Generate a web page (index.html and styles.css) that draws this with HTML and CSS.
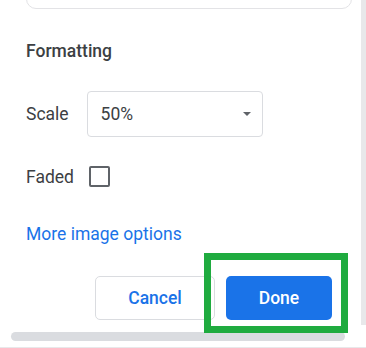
FILE: index.html
```html
<!DOCTYPE html>
<html lang="en">
  <head>
    <meta charset="UTF-8" />
    <title>Image options</title>
    <link rel="stylesheet" href="styles.css">
  </head>
  <body>
    <div class="frame">
      <div class="viewport">
        <div class="content">
          <div class="card"></div>
          <h2 class="heading">Formatting</h2>
          <div class="row scale-row">
            <span class="label">Scale</span>
            <div class="select">
              <span>50%</span>
              <span class="arrow"></span>
            </div>
          </div>
          <div class="row faded-row">
            <span class="label">Faded</span>
            <span class="checkbox"></span>
          </div>
          <a href="#" class="more-link">More image options</a>
          <div class="actions">
            <button type="button" class="btn btn-cancel">Cancel</button>
            <button type="button" class="btn btn-done">Done</button>
          </div>
        </div>
        <div class="vscroll"></div>
      </div>
      <div class="hscroll">
        <div class="hthumb"></div>
      </div>
      <div class="highlight"></div>
    </div>
  </body>
</html>
```
FILE: styles.css
```css
body {
  margin: 0;
  background: #fff;
  font-family: Roboto, "Liberation Sans", sans-serif;
  color: #3c4043;
}

.frame {
  position: relative;
  width: 366px;
  height: 348px;
  overflow: hidden;
}

.viewport {
  display: flex;
  height: 325px;
}

.content {
  flex: 1;
  padding-left: 26px;
}

.vscroll {
  width: 5px;
  background: #e8e8ea;
}

.card {
  width: 324px;
  height: 40px;
  margin-top: -33px;
  border: 1px solid #e3e3e6;
  border-radius: 10px;
}

.heading {
  margin: 32px 0 0;
  font-size: 17.5px;
  font-weight: 500;
  line-height: 20px;
}

.row {
  display: flex;
  align-items: center;
}

.label {
  font-size: 17.5px;
  line-height: 20px;
}

.scale-row {
  margin-top: 30px;
}

.select {
  display: flex;
  align-items: center;
  justify-content: space-between;
  box-sizing: border-box;
  width: 176px;
  height: 46px;
  margin-left: 18px;
  padding: 0 11px 0 13px;
  border: 1px solid #dadce0;
  border-radius: 4px;
  font-size: 17.5px;
}

.arrow {
  width: 0;
  height: 0;
  border-left: 4px solid transparent;
  border-right: 4px solid transparent;
  border-top: 4px solid #5f6368;
}

.faded-row {
  margin-top: 29px;
}

.checkbox {
  box-sizing: border-box;
  width: 21px;
  height: 21px;
  margin-left: 15px;
  border: 2px solid #5f6368;
  border-radius: 2px;
}

.more-link {
  display: block;
  margin-top: 37px;
  font-size: 17.5px;
  line-height: 20px;
  color: #1a73e8;
  text-decoration: none;
}

.actions {
  display: flex;
  justify-content: flex-end;
  gap: 11px;
  margin-top: 32px;
  padding-right: 29px;
}

.btn {
  height: 44px;
  border-radius: 5px;
  font-family: Roboto, "Liberation Sans", sans-serif;
  font-size: 17.5px;
  font-weight: 500;
  cursor: pointer;
}

.btn-cancel {
  width: 120px;
  background: #fff;
  border: 1px solid #dadce0;
  color: #1a73e8;
}

.btn-done {
  width: 106px;
  background: #1a73e8;
  border: none;
  color: #fff;
}

.hscroll {
  height: 23px;
  padding: 7px 0 0 11px;
  box-sizing: border-box;
  border-bottom: 1px solid #e8e8ea;
}

.hthumb {
  width: 334px;
  height: 9px;
  border-radius: 5px;
  background: #dadce0;
}

.highlight {
  position: absolute;
  left: 204px;
  top: 253px;
  width: 144px;
  height: 80px;
  box-sizing: border-box;
  border: 7px solid #1fab3f;
}
```
